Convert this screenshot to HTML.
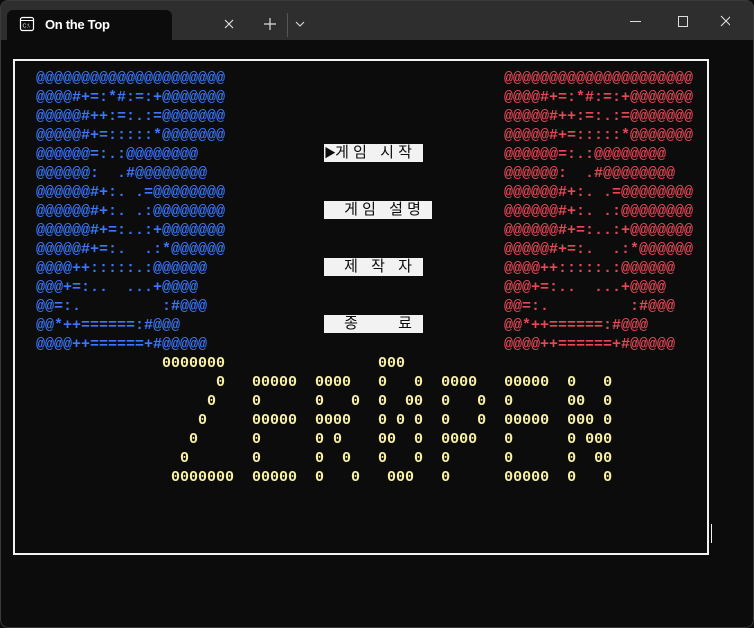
<!DOCTYPE html>
<html><head><meta charset="utf-8"><style>
html,body{margin:0;padding:0;background:#0c0c0c;width:754px;height:628px;overflow:hidden}
#win{position:absolute;left:0;top:0;width:754px;height:628px;background:#0c0c0c;border-radius:8px;overflow:hidden}
#edge{position:absolute;left:0;top:0;width:752px;height:626px;border:1px solid #3a3a3a;border-radius:8px}
#bar{position:absolute;left:0;top:0;width:754px;height:40px;background:#2e2e2e}
#tab{position:absolute;left:7px;top:10px;width:165px;height:31px;background:#0c0c0c;border-radius:6px 6px 0 0}
.t{position:absolute;font-family:"Liberation Sans",sans-serif;color:#fff}
pre{margin:0;position:absolute;font-family:"Liberation Mono","DejaVu Sans Mono",monospace;font-size:15px;line-height:19px;letter-spacing:0;font-weight:bold}
.b{color:#3b78ff}.r{color:#e74856}.y{color:#f9f1a5}
.m{position:absolute;left:324px;height:18px;background:#f2f2f2;color:#0c0c0c;font-family:"Liberation Sans","Noto Sans CJK KR",sans-serif;font-size:15px;line-height:18px;white-space:nowrap}
.m span{display:inline-block;width:18px;text-align:center}
.m i{display:inline-block;width:9px;font-style:normal}
</style></head><body><div id="win">
<div id="bar"></div>
<div id="tab"></div>
<svg style="position:absolute;left:19px;top:16px" width="16" height="16" viewBox="0 0 16 16"><rect x="1.5" y="1.5" width="13" height="13" rx="2" fill="none" stroke="#fff" stroke-width="1.2"/><line x1="1.5" y1="4.5" x2="14.5" y2="4.5" stroke="#fff" stroke-width="1"/><text x="3.5" y="11.5" font-size="5.5" fill="#fff" font-family="Liberation Sans">C:\</text></svg>
<div class="t" style="left:45px;top:17px;font-size:13px;font-weight:bold;letter-spacing:-0.3px">On the Top</div>
<svg style="position:absolute;left:224px;top:19px" width="10" height="10"><path d="M1 1L9 9M9 1L1 9" stroke="#ddd" stroke-width="1.2"/></svg>
<svg style="position:absolute;left:264px;top:18px" width="12" height="12"><path d="M6 0V12M0 6H12" stroke="#ddd" stroke-width="1.2"/></svg>
<div style="position:absolute;left:287px;top:13px;width:1px;height:24px;background:#555"></div>
<svg style="position:absolute;left:295px;top:21px" width="10" height="6"><path d="M1 1L5 5L9 1" stroke="#ddd" stroke-width="1.1" fill="none"/></svg>
<svg style="position:absolute;left:630px;top:15px" width="100" height="14"><path d="M0 6.5H11" stroke="#ddd" stroke-width="1"/><rect x="48.5" y="1.5" width="9" height="10" fill="none" stroke="#ddd" stroke-width="1"/><path d="M91 1L101 11M101 1L91 11" stroke="#ddd" stroke-width="1.1"/></svg>

<div style="position:absolute;left:13px;top:59px;width:692px;height:492px;border:2px solid #f2f2f2"></div>
<div style="position:absolute;left:711px;top:524px;width:1px;height:19px;background:#f2f2f2"></div>

<pre class="b" style="left:36px;top:69px">@@@@@@@@@@@@@@@@@@@@@
@@@@#+=:*#:=:+@@@@@@@
@@@@@#++:=:.:=@@@@@@@
@@@@@#+=:::::*@@@@@@@
@@@@@@=:.:@@@@@@@@
@@@@@@:  .#@@@@@@@@
@@@@@@#+:. .=@@@@@@@@
@@@@@@#+:. .:@@@@@@@@
@@@@@@#+=:..:+@@@@@@@
@@@@@#+=:.  .:*@@@@@@
@@@@++:::::.:@@@@@@
@@@+=:..  ...+@@@@
@@=:.         :#@@@
@@*++======:#@@@
@@@@++======+#@@@@@</pre>
<pre class="r" style="left:504px;top:69px">@@@@@@@@@@@@@@@@@@@@@
@@@@#+=:*#:=:+@@@@@@@
@@@@@#++:=:.:=@@@@@@@
@@@@@#+=:::::*@@@@@@@
@@@@@@=:.:@@@@@@@@
@@@@@@:  .#@@@@@@@@
@@@@@@#+:. .=@@@@@@@@
@@@@@@#+:. .:@@@@@@@@
@@@@@@#+=:..:+@@@@@@@
@@@@@#+=:.  .:*@@@@@@
@@@@++:::::.:@@@@@@
@@@+=:..  ...+@@@@
@@=:.         :#@@@
@@*++======:#@@@
@@@@++======+#@@@@@</pre>
<pre class="y" style="left:36px;top:354px">              0000000                 000
                    0   00000  0000   0   0  0000   00000  0   0
                   0    0      0   0  0  00  0   0  0      00  0
                  0     00000  0000   0 0 0  0   0  00000  000 0
                 0      0      0 0    00  0  0000   0      0 000
                0       0      0  0   0   0  0      0      0  00
               0000000  00000  0   0   000   0      00000  0   0</pre>

<div class="m" style="top:144px;width:99px"><i style="font-size:12px">▶</i><span>게</span><span>임</span><i></i><span>시</span><span>작</span></div>
<div class="m" style="top:201px;width:108px"><i></i><i></i><span>게</span><span>임</span><i></i><span>설</span><span>명</span></div>
<div class="m" style="top:258px;width:99px"><i></i><i></i><span>제</span><i></i><span>작</span><i></i><span>자</span></div>
<div class="m" style="top:315px;width:99px"><i></i><i></i><span>종</span><i></i><i></i><i></i><i></i><span>료</span></div>
<div id="edge"></div>
</div></body></html>
